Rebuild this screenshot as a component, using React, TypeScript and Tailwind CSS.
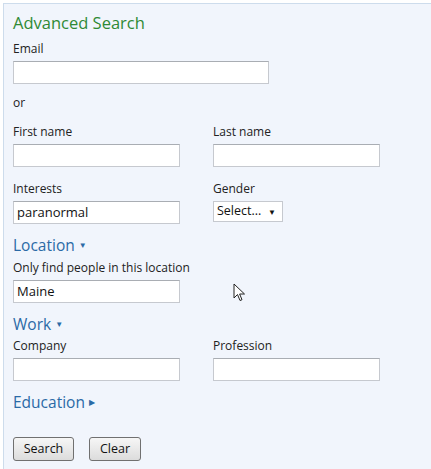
import React from "react";

const font = { fontFamily: '"Open Sans", "Noto Sans", sans-serif' };

function Field({ label, value, w = "w-[167px]" }: { label: string; value?: string; w?: string }) {
  return (
    <div className="flex flex-col">
      <label className="text-[12px] leading-[16px] text-[#222]">{label}</label>
      <div className={`mt-[4px] h-[23px] ${w} border border-[#c6c9cf] border-t-[#a9adb3] bg-white px-[3px] text-[13px] leading-[21px] text-[#111]`}>
        {value}
      </div>
    </div>
  );
}

function Section({ title, open = true }: { title: string; open?: boolean }) {
  return (
    <div className="flex items-center gap-[4px] text-[15.5px] leading-[20px] text-[#2b6aa6]">
      <span>{title}</span>
      <span className="text-[8px] leading-none">{open ? "▼" : "▶"}</span>
    </div>
  );
}

export default function App() {
  return (
    <div className="relative w-[431px] h-[469px] bg-white pt-[3px] pl-[3px]" style={font}>
      <div className="h-full border-l border-t border-[#cddcec] bg-[#f1f5fc] pl-[9px] pt-[8px]">
        <h1 className="text-[16.5px] leading-[22px] text-[#2f8a35]">Advanced Search</h1>

        <div className="mt-[7px]">
          <Field label="Email" w="w-[256px]" />
        </div>
        <p className="mt-[11px] text-[12px] leading-[16px] text-[#222]">or</p>

        <div className="mt-[13px] flex gap-[33px]">
          <Field label="First name" />
          <Field label="Last name" />
        </div>

        <div className="mt-[14px] flex gap-[33px]">
          <Field label="Interests" value="paranormal" />
          <div className="flex flex-col">
            <label className="text-[12px] leading-[16px] text-[#222]">Gender</label>
            <div className="mt-[4px] flex h-[21px] w-[70px] items-center justify-between border border-[#c6c9cf] bg-white pl-[3px] pr-[6px] text-[12.5px] text-[#111]">
              <span>Select...</span>
              <span className="text-[8px]">▼</span>
            </div>
          </div>
        </div>

        <div className="mt-[11px]">
          <Section title="Location" />
          <div className="mt-[5px]">
            <Field label="Only find people in this location" value="Maine" />
          </div>
        </div>

        <div className="mt-[11px]">
          <Section title="Work" />
          <div className="mt-[4px] flex gap-[33px]">
            <Field label="Company" />
            <Field label="Profession" />
          </div>
        </div>

        <div className="mt-[11px]">
          <Section title="Education" open={false} />
        </div>

        <div className="mt-[25px] flex gap-[15px]">
          <button className="h-[24px] w-[61px] rounded-[3px] border border-[#707070] bg-gradient-to-b from-[#f6f6f6] to-[#dcdcdc] text-[12.5px] text-[#111]">
            Search
          </button>
          <button className="h-[24px] w-[52px] rounded-[3px] border border-[#707070] bg-gradient-to-b from-[#f6f6f6] to-[#dcdcdc] text-[12.5px] text-[#111]">
            Clear
          </button>
        </div>
      </div>

      <svg className="absolute left-[233px] top-[283px]" width="14" height="20" viewBox="0 0 14 20">
        <path d="M1 1 L1 15 L4.5 11.5 L7 17.5 L9 16.7 L6.6 11 L11.5 11 Z" fill="#fff" stroke="#222" strokeWidth="1" strokeLinejoin="round" />
      </svg>
    </div>
  );
}
